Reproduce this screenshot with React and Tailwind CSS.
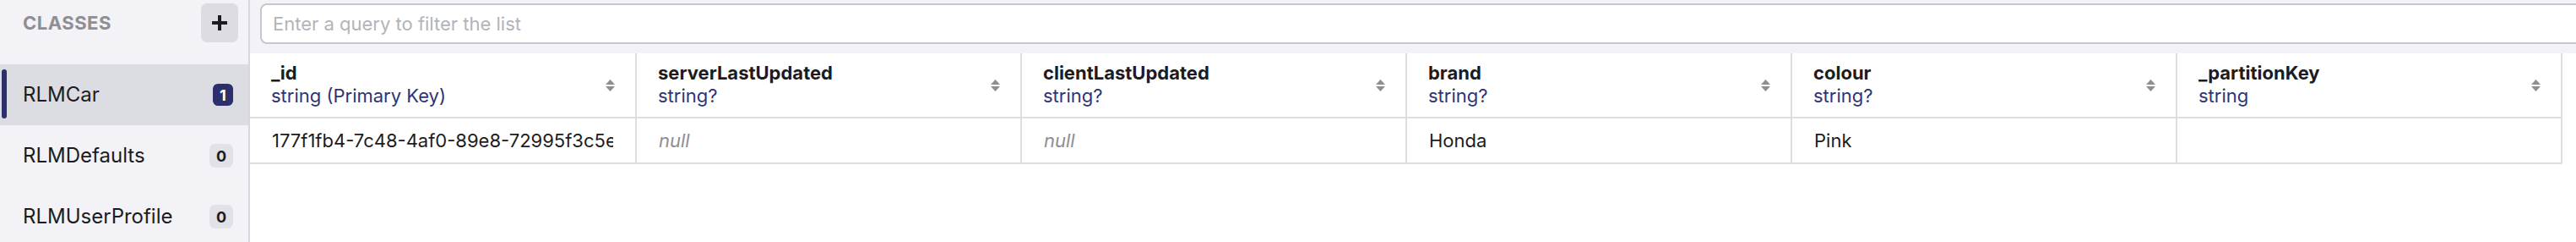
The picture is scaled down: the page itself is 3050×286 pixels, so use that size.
import React from "react";

const columns = [
  { name: "_id", type: "string (Primary Key)" },
  { name: "serverLastUpdated", type: "string?" },
  { name: "clientLastUpdated", type: "string?" },
  { name: "brand", type: "string?" },
  { name: "colour", type: "string?" },
  { name: "_partitionKey", type: "string" },
];

const rows = [
  ["177f1fb4-7c48-4af0-89e8-72995f3c5e01", null, null, "Honda", "Pink", ""],
];

const classes = [
  { name: "RLMCar", count: 1, active: true },
  { name: "RLMDefaults", count: 0 },
  { name: "RLMUserProfile", count: 0 },
];

function SortIcon() {
  return (
    <svg width="11" height="14" viewBox="0 0 11 14" className="shrink-0 text-[#8e8e93]">
      <path d="M0 6 L5.5 0 L11 6 Z" fill="currentColor" />
      <path d="M0 8 L11 8 L5.5 14 Z" fill="currentColor" />
    </svg>
  );
}

function Sidebar() {
  return (
    <div className="w-[296px] shrink-0 bg-[#f2f2f7] border-r-2 border-[#d7d7dd] flex flex-col">
      <div className="flex items-center justify-between pl-[27px] pr-[12px] pt-[4px] pb-[14px]">
        <span className="text-[22px] font-bold tracking-[0.5px] text-[#8e8e94]">CLASSES</span>
        <button className="w-[44px] h-[46px] rounded-[7px] bg-[#dcdce2] flex items-center justify-center">
          <svg width="18" height="18" viewBox="0 0 18 18">
            <path d="M9 1 V17 M1 9 H17" stroke="#1c1c1e" strokeWidth="4" strokeLinecap="round" />
          </svg>
        </button>
      </div>
      <div className="h-[2px] ml-[2px] mr-[12px] bg-[#e2e2e7]" />
      <div className="mt-[12px] flex flex-col">
        {classes.map((c) => (
          <div
            key={c.name}
            className={`relative h-[72px] flex items-center justify-between pl-[27px] pr-[18px] ${c.active ? "bg-[#dcdce3]" : ""}`}
          >
            {c.active && (
              <div className="absolute left-[2px] top-[6px] bottom-[8px] w-[6px] rounded-full bg-[#2b2f6b]" />
            )}
            <span className="text-[24px] text-[#1c1c1e]">{c.name}</span>
            {c.active ? (
              <span className="min-w-[24px] h-[26px] px-[6px] rounded-[6px] bg-[#2b2f6b] text-white text-[18px] font-bold flex items-center justify-center">
                {c.count}
              </span>
            ) : (
              <span className="min-w-[28px] h-[28px] px-[7px] rounded-[7px] bg-[#e1e1e7] text-[#1c1c1e] text-[18px] font-bold flex items-center justify-center">
                {c.count}
              </span>
            )}
          </div>
        ))}
      </div>
    </div>
  );
}

export default function App() {
  return (
    <div
      className="flex w-[3050px] h-[286px] overflow-hidden bg-white"
      style={{ fontFamily: "Inter, 'Noto Sans', sans-serif" }}
    >
      <Sidebar />
      <div className="flex-1 flex flex-col min-w-0">
        <div className="h-[63px] bg-[#f2f2f7] pt-[4px] pl-[12px] overflow-hidden">
          <div className="w-[2800px] h-[48px] rounded-[8px] border-2 border-[#c5c8d0] bg-white flex items-center pl-[13px]">
            <span className="text-[22px] text-[#b3b3ba]">Enter a query to filter the list</span>
          </div>
        </div>
        <div className="grid grid-cols-[repeat(6,456px)] w-max border-r-2 border-[#dedede]">
          {columns.map((col, i) => (
            <div
              key={col.name}
              className={`h-[77px] border-b-2 border-[#dedede] flex items-center justify-between pl-[25px] pr-[24px] ${i > 0 ? "border-l-2" : ""}`}
            >
              <div className="flex flex-col text-[22px] leading-[27px] pb-[1px]">
                <span className="font-bold text-[#1c1c1e]">{col.name}</span>
                <span className="text-[#2e3474]">{col.type}</span>
              </div>
              <SortIcon />
            </div>
          ))}
          {rows.map((row, r) =>
            row.map((cell, i) => (
              <div
                key={`${r}-${i}`}
                className={`h-[54px] border-b-2 border-[#dedede] flex items-center pl-[26px] pr-[26px] overflow-hidden ${i > 0 ? "border-l-2" : ""}`}
              >
                {cell === null ? (
                  <span className="text-[22px] italic text-[#8e8e93]">null</span>
                ) : (
                  <span className="text-[22px] text-[#1c1c1e] whitespace-nowrap overflow-hidden">{cell}</span>
                )}
              </div>
            ))
          )}
        </div>
      </div>
    </div>
  );
}
